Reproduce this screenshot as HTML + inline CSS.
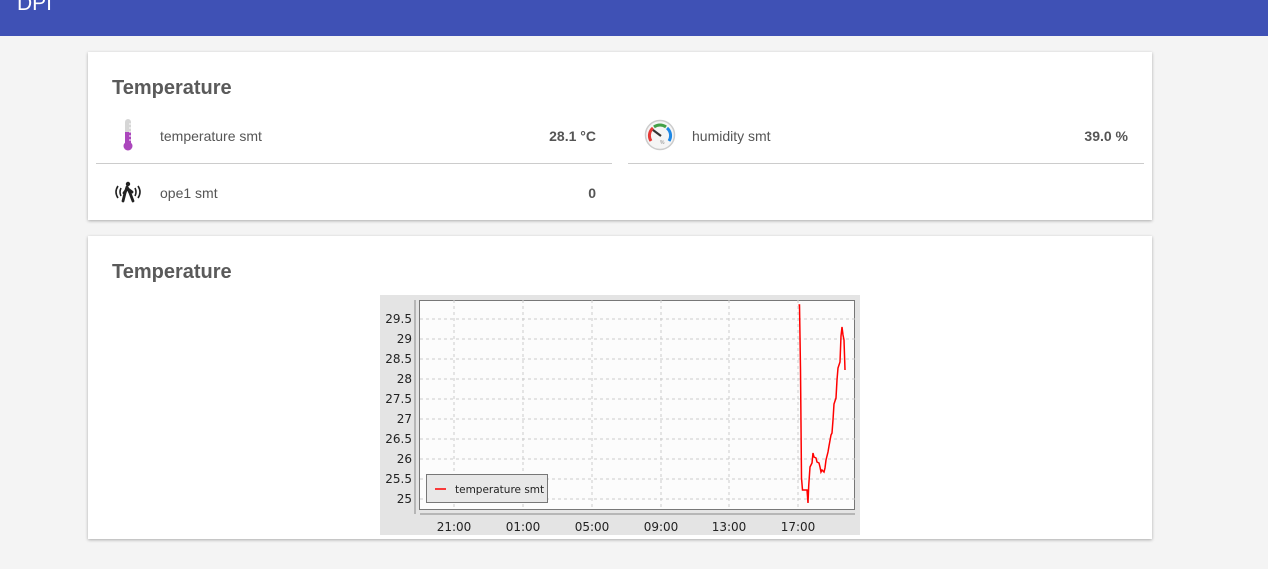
<!DOCTYPE html>
<html><head><meta charset="utf-8"><style>
*{margin:0;padding:0;box-sizing:border-box}
body{width:1268px;height:569px;background:#f4f4f4;font-family:"Liberation Sans",Arial,sans-serif;position:relative;overflow:hidden}
.hdr{position:absolute;left:0;top:0;width:1268px;height:36px;background:#3f51b5}
.hdr span{position:absolute;left:17px;top:-8px;color:#fff;font-size:21px}
.card{position:absolute;left:88px;width:1064px;background:#fff;box-shadow:0 1px 3px rgba(0,0,0,.3)}
h2{position:absolute;left:24px;font-size:20px;font-weight:bold;color:#5a5a5a;}
.t{position:absolute;font-size:14px;color:#555}
.v{position:absolute;font-size:14px;color:#555;font-weight:bold;text-align:right}
.hr{position:absolute;height:1px;background:#ccc}
</style></head><body>
<div class="hdr"><span>DPI</span></div>
<div class="card" style="top:52px;height:168px">
<h2 style="top:25px">Temperature</h2>
<svg style="position:absolute;left:32px;top:66px" width="16" height="34" viewBox="0 0 16 34"><rect x="5" y="1" width="6" height="16" rx="3" fill="#d6d6d6"/><rect x="5" y="14" width="6" height="14" fill="#ab47bc"/><circle cx="8" cy="28" r="4.5" fill="#ab47bc"/><path d="M9 6h2M9 10h2M9 14h2M9 18h2M9 22h2" stroke="#fff" stroke-width="1"/></svg>
<div class="t" style="left:72px;top:76px">temperature smt</div>
<div class="v" style="left:400px;width:108px;top:76px">28.1 °C</div>
<div class="hr" style="left:8px;width:516px;top:111px"></div>
<svg style="position:absolute;left:24px;top:128px" width="32" height="24" viewBox="0 0 32 24"><path d="M6 6Q2 12 6 18M9 8Q7 12 9 16M26 6Q30 12 26 18M23 8Q25 12 23 16" stroke="#222" stroke-width="1.6" fill="none"/><circle cx="16" cy="4" r="2.2" fill="#222"/><path d="M15 7L13 13L11 21M15 7L18 13L21 21M15 9L12 13M16 9L20 12" stroke="#222" stroke-width="2.8" fill="none" stroke-linecap="round"/></svg>
<div class="t" style="left:72px;top:133px">ope1 smt</div>
<div class="v" style="left:400px;width:108px;top:133px">0</div>
<svg style="position:absolute;left:556px;top:67px" width="32" height="32" viewBox="0 0 32 32"><circle cx="16" cy="16" r="14.5" fill="#f5f5f5" stroke="#ccc" stroke-width="1.5"/><path d="M7 22A10 10 0 0 1 9 9" stroke="#e53935" stroke-width="3" fill="none"/><path d="M10 8A10 10 0 0 1 22 8" stroke="#43a047" stroke-width="3" fill="none"/><path d="M23 9A10 10 0 0 1 25 22" stroke="#1e88e5" stroke-width="3" fill="none"/><path d="M9 11L17 17" stroke="#333" stroke-width="2.2"/><text x="16" y="25" font-size="5" fill="#888" font-family="Liberation Sans">%</text></svg>
<div class="t" style="left:604px;top:76px">humidity smt</div>
<div class="v" style="left:930px;width:110px;top:76px">39.0 %</div>
<div class="hr" style="left:540px;width:516px;top:111px"></div>
</div>
<div class="card" style="top:236px;height:303px">
<h2 style="top:25px">Temperature</h2>
</div>
<svg style="position:absolute;left:380px;top:295px" width="480" height="240" viewBox="380 295 480 240" font-family="DejaVu Sans,sans-serif" font-size="12">
<rect x="380" y="295" width="480" height="240" fill="#e4e4e4"/>
<rect x="419.5" y="300.5" width="435" height="209" fill="#fcfcfc" stroke="#777"/>
<g stroke="#ccc" stroke-dasharray="3,3">
<path d="M420 319H855M420 339H855M420 359H855M420 379H855M420 399H855M420 419H855M420 439H855M420 459H855M420 479H855M420 499H855"/>
<path d="M454 300V510M523 300V510M592 300V510M661 300V510M729 300V510M798 300V510"/>
</g>
<path d="M415 300V514M420 514H855" stroke="#888"/>
<g fill="#222" text-anchor="end">
<text x="412" y="323">29.5</text><text x="412" y="343">29</text><text x="412" y="363">28.5</text><text x="412" y="383">28</text><text x="412" y="403">27.5</text><text x="412" y="423">27</text><text x="412" y="443">26.5</text><text x="412" y="463">26</text><text x="412" y="483">25.5</text><text x="412" y="503">25</text>
</g>
<g fill="#222" text-anchor="middle">
<text x="454" y="531">21:00</text><text x="523" y="531">01:00</text><text x="592" y="531">05:00</text><text x="661" y="531">09:00</text><text x="729" y="531">13:00</text><text x="798" y="531">17:00</text>
</g>
<polyline fill="none" stroke="#f00" stroke-width="1.5" points="798.5,305 799.5,305 800.5,370 801.5,478 802.5,490 807,490 808,503 808.7,486 810,467 812,463 813,453 814,457 816,458 817,462 819,463 820,467 821,472 822,470 824,472 825,468 826,460 828,452 829,446 831,435 832,433 833,420 834,404 836,398 837,380 838,368 840,362 841,336 842,327 843,335 844,340 845,370"/>
<rect x="426.5" y="474.5" width="121" height="28" fill="#e8e8e8" stroke="#777"/>
<path d="M435 489H446" stroke="#f00" stroke-width="1.5"/>
<text x="455" y="493" fill="#222" font-size="10.5">temperature smt</text>
</svg>
</body></html>
